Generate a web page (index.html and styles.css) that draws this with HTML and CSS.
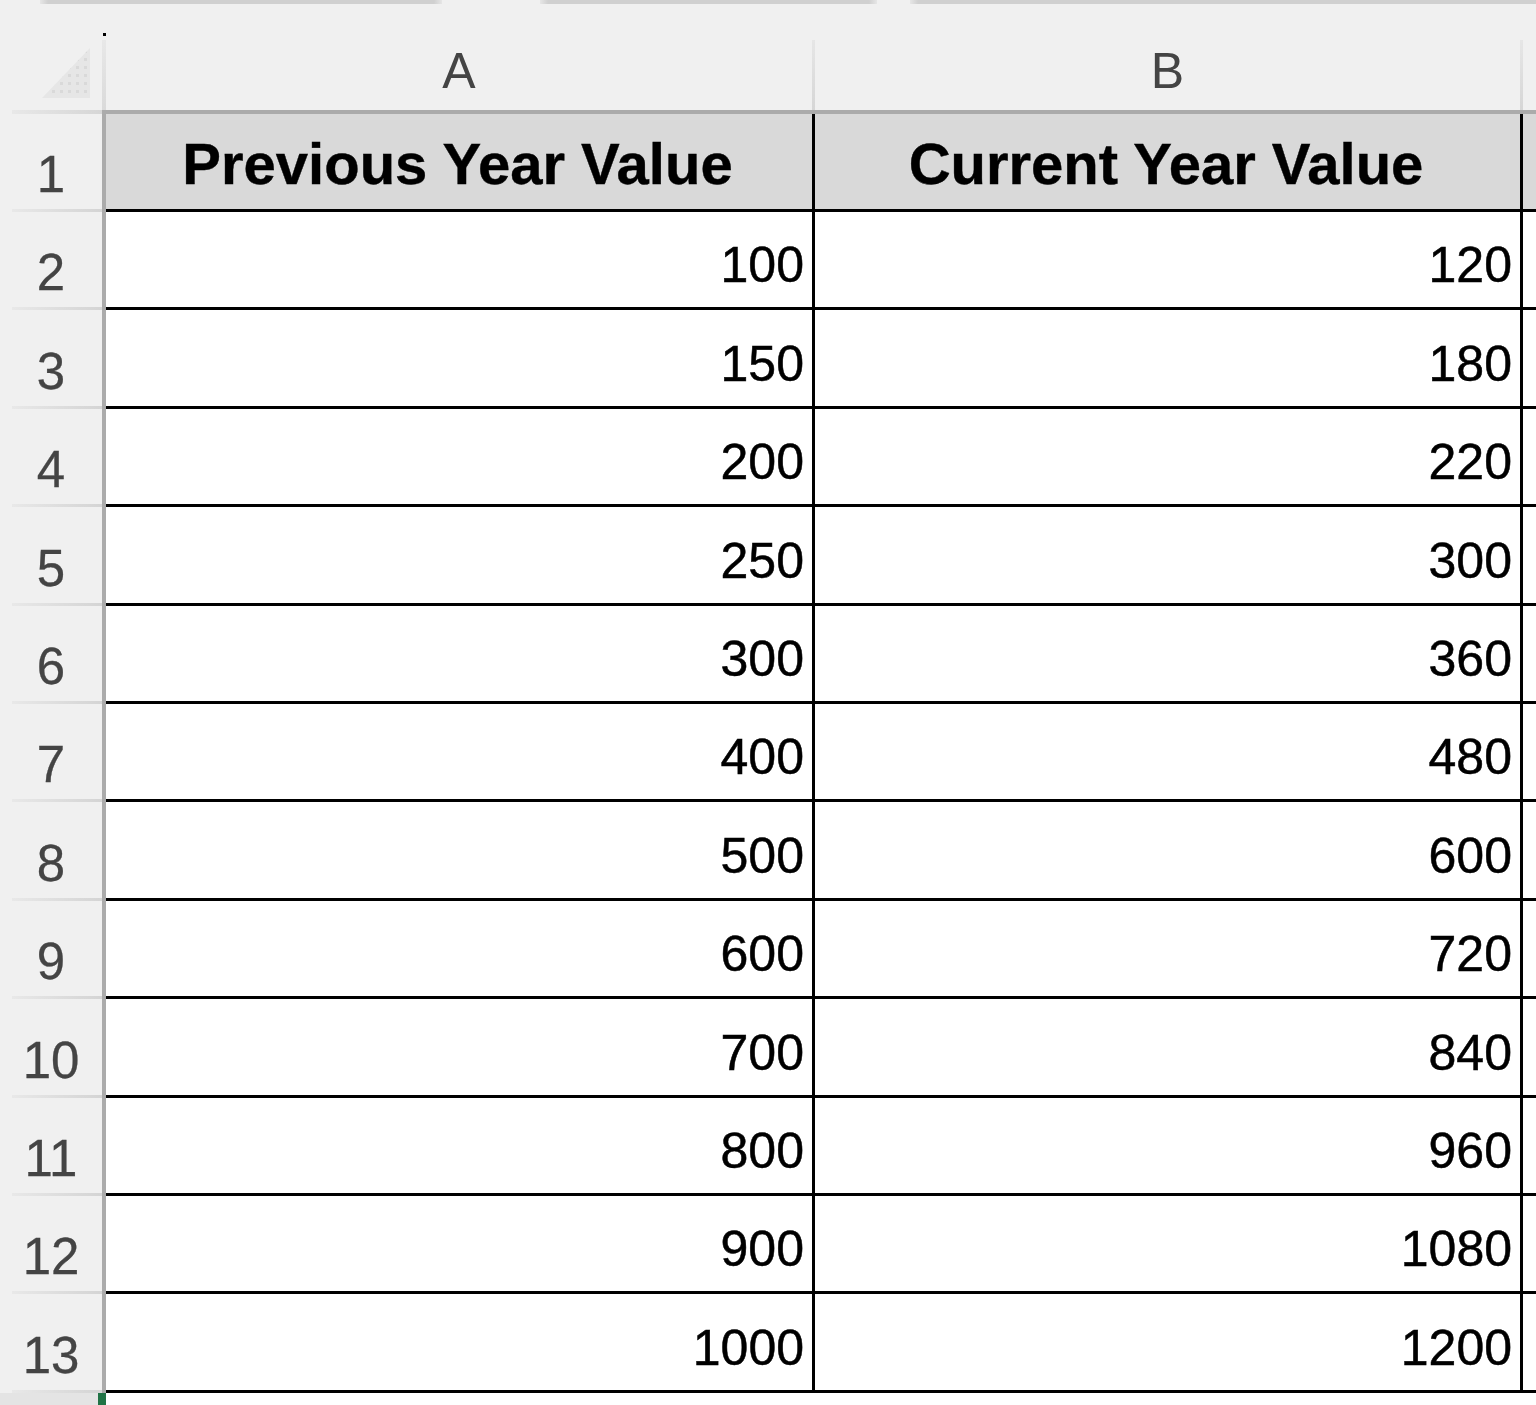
FILE: index.html
```html
<!DOCTYPE html>
<html lang="en">
<head>
<meta charset="utf-8">
<title>Sheet</title>
<link rel="stylesheet" href="styles.css">
</head>
<body>
<div class="sheet">
  <div class="bars">
    <span class="bar bar1"></span>
    <span class="bar bar2"></span>
    <span class="bar bar3"></span>
  </div>
  <div class="colheads">
    <div class="corner">
      <span class="dot"></span>
      <svg class="tri" width="48" height="50" viewBox="0 0 48 50">
        <defs>
          <pattern id="dots" width="8" height="8" patternUnits="userSpaceOnUse">
            <rect width="8" height="8" fill="#e6e6e6"/>
            <rect x="2" y="2" width="3" height="3" fill="#d9d9d9"/>
          </pattern>
        </defs>
        <polygon points="48,0 48,50 0,50" fill="url(#dots)"/>
      </svg>
    </div>
    <div class="ch ch-a">A</div>
    <div class="ch ch-b">B</div>
    <div class="ch ch-rest"></div>
  </div>

  <div class="row row-head">
    <div class="rh">1</div>
    <div class="c ca th">Previous Year Value</div>
    <div class="c cb th">Current Year Value</div>
    <div class="c crest"></div>
  </div>
  <div class="row"><div class="rh">2</div><div class="c ca">100</div><div class="c cb">120</div><div class="c crest"></div></div>
  <div class="row"><div class="rh">3</div><div class="c ca">150</div><div class="c cb">180</div><div class="c crest"></div></div>
  <div class="row"><div class="rh">4</div><div class="c ca">200</div><div class="c cb">220</div><div class="c crest"></div></div>
  <div class="row"><div class="rh">5</div><div class="c ca">250</div><div class="c cb">300</div><div class="c crest"></div></div>
  <div class="row"><div class="rh">6</div><div class="c ca">300</div><div class="c cb">360</div><div class="c crest"></div></div>
  <div class="row"><div class="rh">7</div><div class="c ca">400</div><div class="c cb">480</div><div class="c crest"></div></div>
  <div class="row"><div class="rh">8</div><div class="c ca">500</div><div class="c cb">600</div><div class="c crest"></div></div>
  <div class="row"><div class="rh">9</div><div class="c ca">600</div><div class="c cb">720</div><div class="c crest"></div></div>
  <div class="row"><div class="rh">10</div><div class="c ca">700</div><div class="c cb">840</div><div class="c crest"></div></div>
  <div class="row"><div class="rh">11</div><div class="c ca">800</div><div class="c cb">960</div><div class="c crest"></div></div>
  <div class="row"><div class="rh">12</div><div class="c ca">900</div><div class="c cb">1080</div><div class="c crest"></div></div>
  <div class="row"><div class="rh">13</div><div class="c ca">1000</div><div class="c cb">1200</div><div class="c crest"></div></div>

  <div class="tail">
    <div class="tail-rh"><span class="green"></span></div>
    <div class="tail-cells"></div>
  </div>
</div>
</body>
</html>
```

FILE: styles.css
```css
html, body {
  margin: 0;
  padding: 0;
}
body {
  background: #f0f0f0;
  font-family: "Liberation Sans", Arial, sans-serif;
  width: 1536px;
  height: 1405px;
  overflow: hidden;
}
.sheet {
  display: flex;
  flex-direction: column;
  width: 1536px;
  height: 1405px;
}

/* top ribbon remnants */
.bars {
  display: flex;
  height: 4px;
  flex: none;
}
.bar {
  height: 4px;
  background: linear-gradient(to right, #e6e6e6 0, #d0d0d0 8px, #d0d0d0 calc(100% - 8px), #e6e6e6 100%);
}
.bar1 { margin-left: 40px; width: 402px; }
.bar2 { margin-left: 98px; width: 337px; }
.bar3 { margin-left: 33px; flex: 1; background: linear-gradient(to right, #e6e6e6 0, #d0d0d0 8px, #d0d0d0 100%); }

/* column headers */
.colheads {
  display: flex;
  height: 110px;
  flex: none;
}
.corner {
  position: relative;
  width: 106px;
  box-sizing: border-box;
  display: flex;
  justify-content: flex-end;
  align-items: flex-end;
  padding: 0 16px 16px 0;
  background:
    linear-gradient(#ababab, #ababab) right bottom / 4px 4px no-repeat,
    linear-gradient(to bottom, #f0f0f0 36px, #e8e8e8 36px, #d9d9d9 100%) right top / 4px 100% no-repeat,
    linear-gradient(to right, #f0f0f0 12px, #e8e8e8 12px, #d6d6d6 100%) left bottom / 102px 4px no-repeat,
    #f0f0f0;
}
.dot {
  position: absolute;
  left: 103px;
  top: 29px;
  width: 3px;
  height: 3px;
  background: #000;
}
.tri { display: block; }
.ch {
  box-sizing: border-box;
  height: 110px;
  border-bottom: 4px solid #ababab;
  display: flex;
  justify-content: center;
  align-items: flex-end;
  padding: 0 3px 10px 0;
  font-size: 50px;
  color: #444;
  background:
    linear-gradient(to bottom, #f0f0f0 36px, #e6e6e6 36px, #d6d6d6 100%) right top / 3px 100% no-repeat,
    #f0f0f0;
}
.ch-a { width: 709px; }
.ch-b { width: 708px; }
.ch-rest { flex: 1; background: #f0f0f0; padding: 0; }

/* rows */
.row {
  display: flex;
  height: 98.4px;
  flex: none;
}
.row-head { height: 98px; }
.rh {
  width: 106px;
  box-sizing: border-box;
  border-right: 4px solid #ababab;
  display: flex;
  justify-content: center;
  align-items: flex-end;
  padding-bottom: 8px;
  font-size: 51px;
  color: #444;
  -webkit-text-stroke: 0.3px #444;
  background:
    linear-gradient(to right, #f0f0f0 12px, #e8e8e8 12px, #d4d4d4 100%) left bottom / 102px 3px no-repeat,
    #f0f0f0;
}
.c {
  box-sizing: border-box;
  background: #fff;
  border-right: 3px solid #000;
  border-bottom: 3px solid #000;
  display: flex;
  justify-content: flex-end;
  align-items: flex-end;
  padding: 0 8px 13px 0;
  font-size: 50px;
  color: #000;
  -webkit-text-stroke: 0.5px #000;
}
.ca { width: 709px; }
.cb { width: 708px; }
.crest { flex: 1; border-right: none; padding: 0; }
.row-head .c {
  background: #d9d9d9;
}
.th {
  justify-content: center;
  font-weight: bold;
  font-size: 58px;
  padding: 0 3px 12px 0;
  -webkit-text-stroke: 0.4px #000;
}

/* partially visible next row */
.tail {
  flex: 1;
  display: flex;
}
.tail-rh {
  width: 106px;
  display: flex;
  justify-content: flex-end;
  background: #e4e4e4;
}
.green {
  width: 8px;
  background: #217346;
}
.tail-cells {
  flex: 1;
  background: #fff;
}
```
